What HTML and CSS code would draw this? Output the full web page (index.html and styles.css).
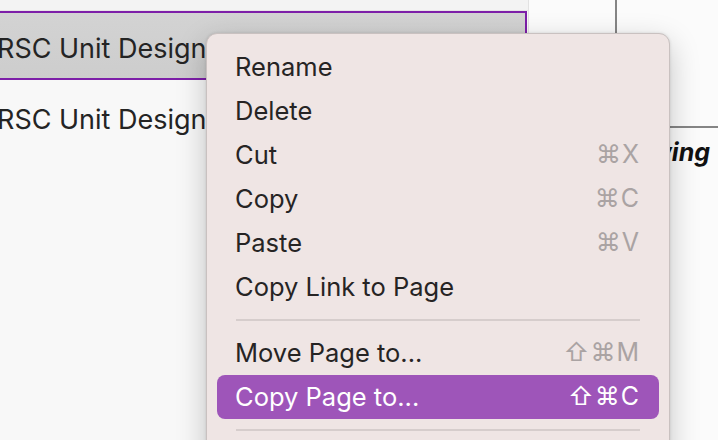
FILE: index.html
```html
<!DOCTYPE html>
<html>
<head>
<meta charset="utf-8">
<link rel="stylesheet" href="styles.css">
</head>
<body>
<div class="app">
  <aside class="sidebar">
    <div class="top-strip"></div>
    <div class="page-row selected"><span class="page-name">RSC Unit Design</span></div>
    <div class="page-row"><span class="page-name">RSC Unit Design</span></div>
  </aside>
  <main class="canvas">
    <div class="frame-area">
      <div class="frame-gap"></div>
      <div class="frame"></div>
    </div>
    <div class="frame-title">Drawing</div>
  </main>
</div>

<div class="menu">
  <div class="item"><span class="label">Rename</span></div>
  <div class="item"><span class="label">Delete</span></div>
  <div class="item"><span class="label">Cut</span><span class="key">⌘X</span></div>
  <div class="item"><span class="label">Copy</span><span class="key">⌘C</span></div>
  <div class="item"><span class="label">Paste</span><span class="key">⌘V</span></div>
  <div class="item"><span class="label">Copy Link to Page</span></div>
  <div class="sep"></div>
  <div class="item"><span class="label">Move Page to...</span><span class="key">⇧⌘M</span></div>
  <div class="item active"><span class="label">Copy Page to...</span><span class="key">⇧⌘C</span></div>
  <div class="sep"></div>
</div>
</body>
</html>
```
FILE: styles.css
```css
html, body {
  margin: 0;
  padding: 0;
  height: 100%;
  overflow: hidden;
}
body {
  font-family: Inter, "Noto Sans", "DejaVu Sans", sans-serif;
  background: #fafafa;
  color: #242424;
}
.app {
  display: flex;
  height: 440px;
}
.sidebar {
  width: 528px;
  flex: none;
  background: #f8f8f8;
  border-right: 1px solid #e2e2e2;
  display: flex;
  flex-direction: column;
}
.top-strip {
  height: 10px;
  background: #f3f3f3;
  border-bottom: 1px solid #e6e6e6;
}
.page-row {
  height: 62px;
  padding-top: 8px;
  display: flex;
  align-items: center;
  font-size: 27px;
  white-space: nowrap;
  overflow: hidden;
}
.page-name {
  margin-left: -3px;
}
.page-row.selected {
  height: 60px;
  padding-top: 5px;
  width: 525px;
  background: linear-gradient(#d3d3d3, #cdcdcd);
  border-top: 2px solid #7d1fa8;
  border-bottom: 2px solid #7d1fa8;
  border-right: 2px solid #7d1fa8;
}
.canvas {
  flex: 1;
  background: #fbfbfb;
  position: relative;
}
.frame-area {
  display: flex;
  height: 128px;
}
.frame-gap {
  width: 86px;
  flex: none;
}
.frame {
  flex: 1;
  border-left: 2px solid #858585;
  border-bottom: 2px solid #858585;
}
.frame-title {
  font-weight: 700;
  font-style: italic;
  font-size: 25px;
  color: #111;
  text-align: right;
  padding-right: 8px;
  margin-top: 9px;
}

/* context menu (overlay) */
.menu {
  position: absolute;
  left: 206px;
  top: 33px;
  width: 442px;
  height: 440px;
  padding: 11px 10px;
  background: #efe5e4;
  border: 1px solid #c9c1c0;
  border-radius: 11px;
  box-shadow: 0 10px 30px rgba(0,0,0,0.22), 0 0 3px rgba(0,0,0,0.12);
}
.item {
  height: 44px;
  display: flex;
  align-items: center;
  justify-content: space-between;
  padding: 0 19px 2px 18px;
  box-sizing: border-box;
  border-radius: 8px;
  font-size: 25.5px;
  color: #262424;
}
.key {
  color: #aaa3a3;
  font-family: Inter, "DejaVu Sans", sans-serif;
  font-size: 25px;
  letter-spacing: 1px;
}
.item.active {
  background: #9e55b9;
  color: #ffffff;
}
.item.active .key {
  color: #ffffff;
}
.sep {
  height: 2px;
  margin: 10px 19px;
  background: #d6cdcc;
}
```
